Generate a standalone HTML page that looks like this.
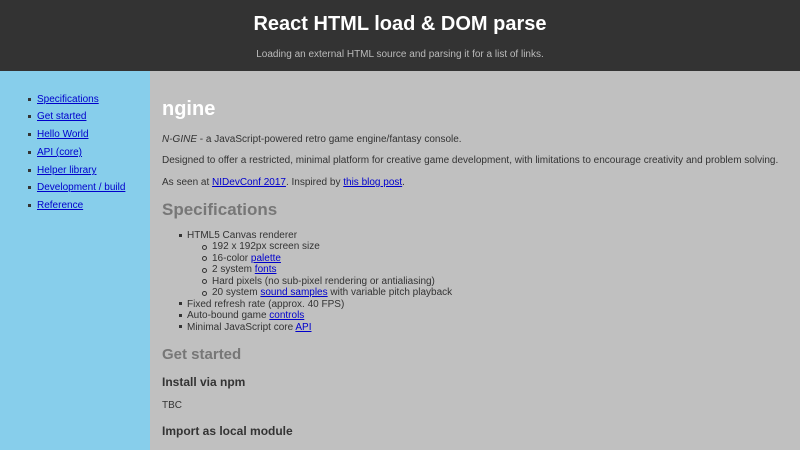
<!DOCTYPE html>
<html><head><style>
body{margin:0;width:800px;height:450px;overflow:hidden;font-family:"Liberation Sans",sans-serif;background:#c0c0c0;position:relative}
.hd{position:absolute;left:0;top:0;width:800px;height:71px;background:#333}
.sb{position:absolute;left:0;top:71px;width:150px;height:379px;background:#87ceeb}
.a{position:absolute;white-space:nowrap;line-height:1}
a{color:#0000cc;text-decoration:underline}
.t{font-size:10px;color:#333;margin-top:1px}
.dot{position:absolute;width:3px;height:3px;background:#333}
.circ{position:absolute;width:3px;height:3px;border:1px solid #333;border-radius:50%}
</style></head><body>
<div class="hd"></div>
<div class="a" style="left:0;width:800px;text-align:center;top:14px;font-size:20px;font-weight:bold;color:#fff">React HTML load &amp; DOM parse</div>
<div class="a" style="left:0;width:800px;text-align:center;top:50px;font-size:10px;color:#bbb">Loading an external HTML source and parsing it for a list of links.</div>
<div class="sb"></div>
<div class="dot" style="left:28px;top:98px"></div><div class="a t" style="left:37px;top:94px"><a href="#">Specifications</a></div>
<div class="dot" style="left:28px;top:115px"></div><div class="a t" style="left:37px;top:111px"><a href="#">Get started</a></div>
<div class="dot" style="left:28px;top:133px"></div><div class="a t" style="left:37px;top:129px"><a href="#">Hello World</a></div>
<div class="dot" style="left:28px;top:151px"></div><div class="a t" style="left:37px;top:147px"><a href="#">API (core)</a></div>
<div class="dot" style="left:28px;top:169px"></div><div class="a t" style="left:37px;top:165px"><a href="#">Helper library</a></div>
<div class="dot" style="left:28px;top:186px"></div><div class="a t" style="left:37px;top:182px"><a href="#">Development / build</a></div>
<div class="dot" style="left:28px;top:204px"></div><div class="a t" style="left:37px;top:200px"><a href="#">Reference</a></div>

<div class="a" style="left:162px;top:99px;font-size:20px;font-weight:bold;color:#fff">ngine</div>
<div class="a t" style="left:162px;top:134px"><i>N-GINE</i> - a JavaScript-powered retro game engine/fantasy console.</div>
<div class="a t" style="left:162px;top:155px">Designed to offer a restricted, minimal platform for creative game development, with limitations to encourage creativity and problem solving.</div>
<div class="a t" style="left:162px;top:177px">As seen at <a href="#">NIDevConf 2017</a>. Inspired by <a href="#">this blog post</a>.</div>
<div class="a" style="left:162px;top:201px;font-size:17px;font-weight:bold;color:#777">Specifications</div>

<div class="dot" style="left:179px;top:234px"></div><div class="a t" style="left:187px;top:230px">HTML5 Canvas renderer</div>
<div class="circ" style="left:202px;top:245px"></div><div class="a t" style="left:212px;top:241px">192 x 192px screen size</div>
<div class="circ" style="left:202px;top:256px"></div><div class="a t" style="left:212px;top:253px">16-color <a href="#">palette</a></div>
<div class="circ" style="left:202px;top:268px"></div><div class="a t" style="left:212px;top:264px">2 system <a href="#">fonts</a></div>
<div class="circ" style="left:202px;top:279px"></div><div class="a t" style="left:212px;top:276px">Hard pixels (no sub-pixel rendering or antialiasing)</div>
<div class="circ" style="left:202px;top:291px"></div><div class="a t" style="left:212px;top:287px">20 system <a href="#">sound samples</a> with variable pitch playback</div>
<div class="dot" style="left:179px;top:302px"></div><div class="a t" style="left:187px;top:299px">Fixed refresh rate (approx. 40 FPS)</div>
<div class="dot" style="left:179px;top:314px"></div><div class="a t" style="left:187px;top:310px">Auto-bound game <a href="#">controls</a></div>
<div class="dot" style="left:179px;top:325px"></div><div class="a t" style="left:187px;top:322px">Minimal JavaScript core <a href="#">API</a></div>

<div class="a" style="left:162px;top:347px;font-size:15px;font-weight:bold;color:#777">Get started</div>
<div class="a" style="left:162px;top:376px;font-size:12px;font-weight:bold;color:#333">Install via npm</div>
<div class="a t" style="left:162px;top:400px">TBC</div>
<div class="a" style="left:162px;top:425px;font-size:12px;font-weight:bold;color:#333">Import as local module</div>
</body></html>
